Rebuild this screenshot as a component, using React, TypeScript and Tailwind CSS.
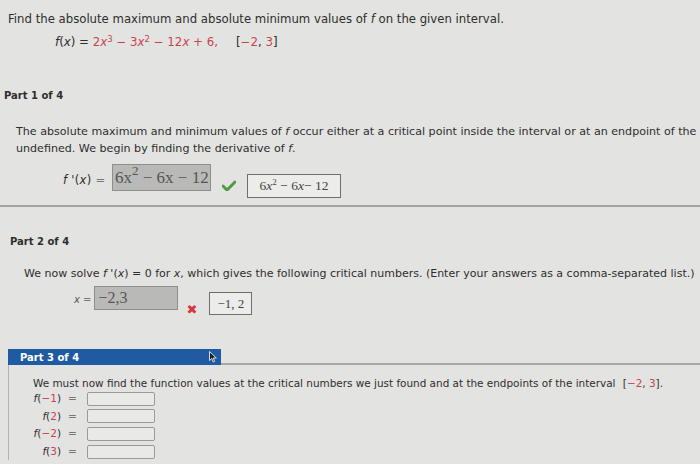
const font = "font-['DejaVu_Sans',Verdana,sans-serif]";
const serif = "font-['Liberation_Serif','DejaVu_Serif',serif]";

function R({ children }: { children: React.ReactNode }) {
  return <span className="text-[#c9434f]">{children}</span>;
}

function AnswerRow({ label, arg }: { label: string; arg: string }) {
  return (
    <div className="flex h-[17.6px] items-center">
      <div className="w-[52px] text-right text-[10.5px]">
        <i>f</i>(<R>{arg}</R>)
      </div>
      <span className="ml-[7px] w-[19px] text-[10.5px] text-[#777]">=</span>
      <div className="h-[14px] w-[68px] rounded-[2px] border border-[#9a9a98] bg-[#e9e9e7]" aria-label={label} />
    </div>
  );
}

export default function App() {
  return (
    <div className={`${font} h-[464px] w-[700px] overflow-hidden whitespace-nowrap bg-[#e3e3e1] text-[#2e2e2e]`}>
      <div className="pl-[8px] pt-[10px] text-[11.7px] leading-[18px]">
        Find the absolute maximum and absolute minimum values of <i>f</i> on the given interval.
      </div>
      <div className="mt-[5px] pl-[55px] text-[11.8px] leading-[18px]">
        <i>f</i>(<i>x</i>) = <R>2<i>x</i><sup className="text-[8.5px]">3</sup> − 3<i>x</i><sup className="text-[8.5px]">2</sup> − 12<i>x</i> + 6,</R>
        <span className="ml-[18px]">[<R>−2</R>, <R>3</R>]</span>
      </div>

      <div className="mt-[37px] pl-[4px] text-[10px] font-bold leading-[16px]">Part 1 of 4</div>
      <div className="mt-[19px] pl-[16px] text-[11.1px] leading-[17px]">
        <div>
          The absolute maximum and minimum values of <i>f</i> occur either at a critical point inside the interval or at an endpoint of the
        </div>
        <div>
          undefined. We begin by finding the derivative of <i>f</i>.
        </div>
      </div>
      <div className="mt-[7px] flex items-start pl-[63px]">
        <span className="mt-[8px] w-[46px] text-[11.5px] tracking-[0.3px]">
          <i>f</i> '(<i>x</i>) <span className="text-[#777]">=</span>
        </span>
        <div className={`${serif} ml-[3px] flex h-[27px] w-[99px] items-center border border-[#8e8e8c] bg-[#b9b9b7] px-[2px] text-[17px] text-[#555]`}>
          6x<sup className="text-[13px]">2</sup>&nbsp;− 6x − 12
        </div>
        <svg className="ml-[11px] mt-[16px]" width="14" height="11" viewBox="0 0 14 11">
          <path d="M1 6 L5 10 L13 2" stroke="#4e9a47" strokeWidth="3" fill="none" strokeLinecap="round" strokeLinejoin="round" />
        </svg>
        <div className={`${serif} ml-[11px] mt-[10px] flex h-[24px] w-[94px] items-center justify-center border border-[#6e6e6c] bg-[#ececea] text-[13.5px] text-[#444]`}>
          6<i>x</i><sup className="text-[9px]">2</sup>&nbsp;− 6<i>x</i> − 12
        </div>
      </div>

      <div className="mt-[7px] h-[2px] bg-[#a3a3a1]" />

      <div className="mt-[27px] pl-[10px] text-[10px] font-bold leading-[16px]">Part 2 of 4</div>
      <div className="mt-[15px] pl-[24px] text-[11px] leading-[17px]">
        We now solve <i>f</i> '(<i>x</i>) = 0 for <i>x</i>, which gives the following critical numbers. (Enter your answers as a comma-separated list.)
      </div>
      <div className="mt-[4px] flex items-start pl-[74px]">
        <span className="mt-[6px] text-[10px] text-[#555]">
          <i>x</i> <span className="text-[#777]">=</span>
        </span>
        <div className={`${serif} ml-[2px] flex h-[24px] w-[84px] items-center border border-[#8e8e8c] bg-[#b9b9b7] px-[4px] text-[16px] text-[#555]`}>
          −2,3
        </div>
        <span className="ml-[9px] mt-[17px] text-[13px] font-bold leading-none text-[#d8343f]">✖</span>
        <div className={`${serif} ml-[12px] mt-[6px] flex h-[23px] w-[43px] items-center justify-center border border-[#6e6e6c] bg-[#ececea] text-[13px] text-[#444]`}>
          −1, 2
        </div>
      </div>

      <div className="mt-[33px] flex items-end">
        <div className="ml-[8px] flex h-[16px] w-[213px] items-center bg-[#1f5aa3] pl-[12px] text-[10px] font-bold text-white">
          Part 3 of 4
          <svg className="ml-auto mr-[4px]" width="8" height="12" viewBox="0 0 8 12">
            <path d="M0.5 0.5 L0.5 9.5 L2.8 7.5 L4.3 11 L5.6 10.4 L4.2 7 L7.3 7 Z" fill="#222" stroke="#fff" strokeWidth="0.8" />
          </svg>
        </div>
        <div className="h-[2px] flex-1 bg-[#a8a8a6]" />
      </div>
      <div className="ml-[8px] border-l border-[#b3b3b1] pl-[24px] pt-[10px]">
        <div className="text-[10.45px] leading-[17px]">
          We must now find the function values at the critical numbers we just found and at the endpoints of the interval <span className="ml-[4px]">[<R>−2</R>, <R>3</R>]</span>.
        </div>
        <div className="-ml-[24px] mt-[-2px]">
          <AnswerRow label="f(-1)" arg="−1" />
          <AnswerRow label="f(2)" arg="2" />
          <AnswerRow label="f(-2)" arg="−2" />
          <AnswerRow label="f(3)" arg="3" />
        </div>
      </div>
    </div>
  );
}
